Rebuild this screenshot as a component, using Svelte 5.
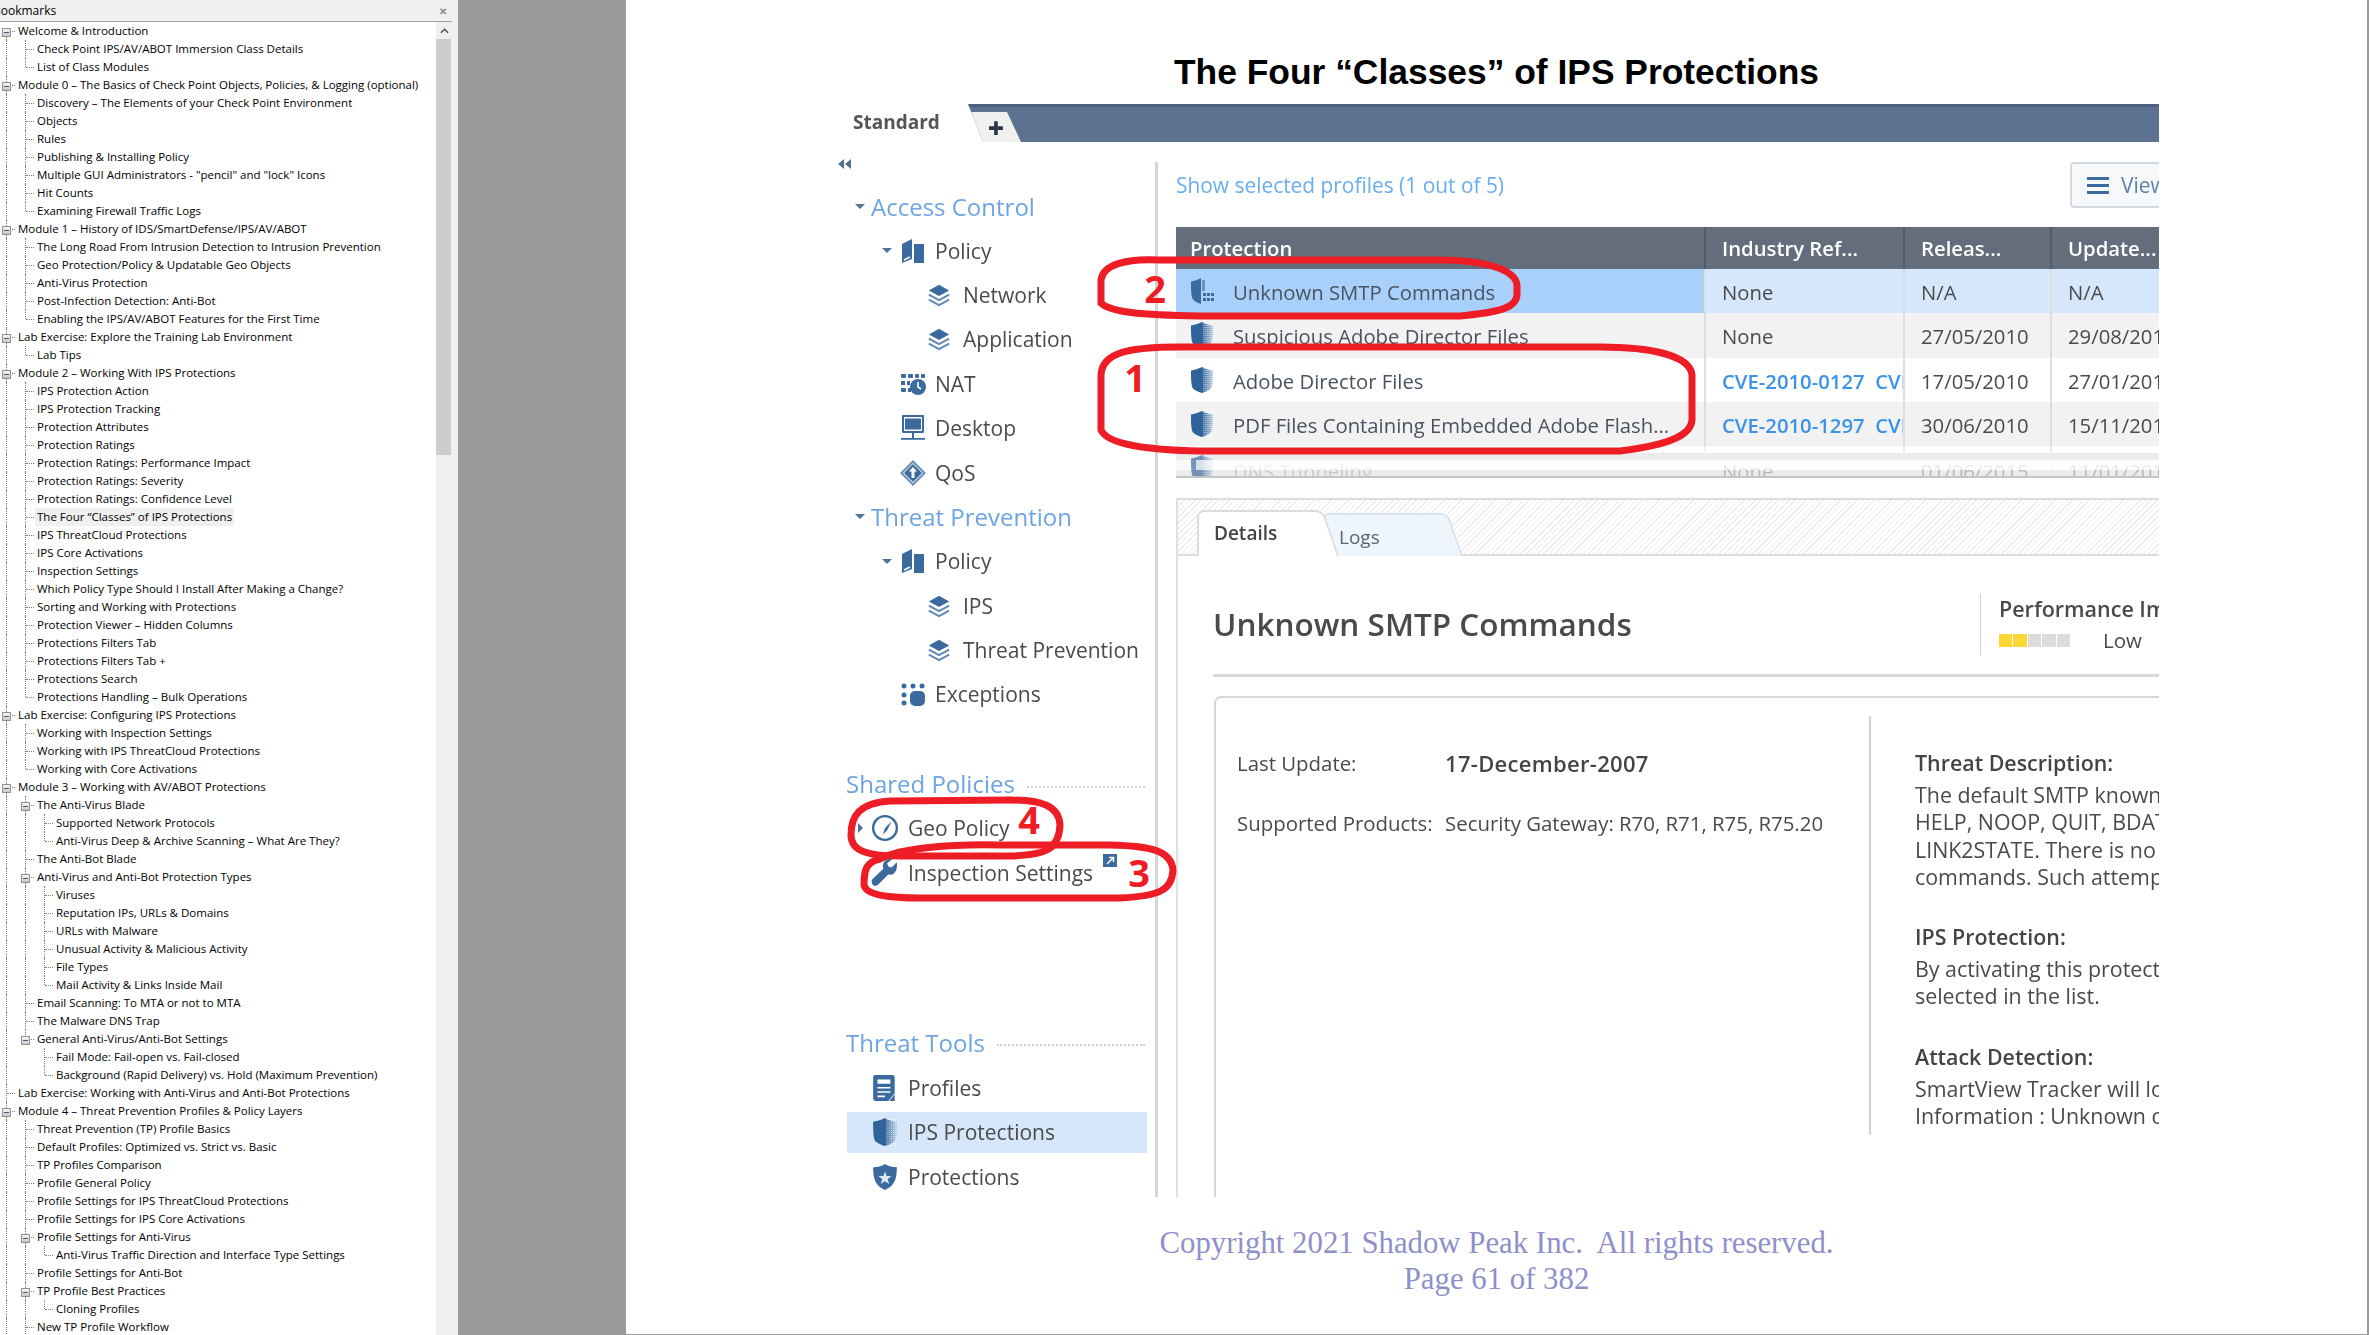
<script>
const tree = [
  [0, 'Welcome & Introduction', 1],
  [1, 'Check Point IPS/AV/ABOT Immersion Class Details'],
  [1, 'List of Class Modules'],
  [0, 'Module 0 – The Basics of Check Point Objects, Policies, & Logging (optional)', 1],
  [1, 'Discovery – The Elements of your Check Point Environment'],
  [1, 'Objects'],
  [1, 'Rules'],
  [1, 'Publishing & Installing Policy'],
  [1, 'Multiple GUI Administrators - "pencil" and "lock" Icons'],
  [1, 'Hit Counts'],
  [1, 'Examining Firewall Traffic Logs'],
  [0, 'Module 1 – History of IDS/SmartDefense/IPS/AV/ABOT', 1],
  [1, 'The Long Road From Intrusion Detection to Intrusion Prevention'],
  [1, 'Geo Protection/Policy & Updatable Geo Objects'],
  [1, 'Anti-Virus Protection'],
  [1, 'Post-Infection Detection: Anti-Bot'],
  [1, 'Enabling the IPS/AV/ABOT Features for the First Time'],
  [0, 'Lab Exercise: Explore the Training Lab Environment', 1],
  [1, 'Lab Tips'],
  [0, 'Module 2 – Working With IPS Protections', 1],
  [1, 'IPS Protection Action'],
  [1, 'IPS Protection Tracking'],
  [1, 'Protection Attributes'],
  [1, 'Protection Ratings'],
  [1, 'Protection Ratings: Performance Impact'],
  [1, 'Protection Ratings: Severity'],
  [1, 'Protection Ratings: Confidence Level'],
  [1, 'The Four “Classes” of IPS Protections'],
  [1, 'IPS ThreatCloud Protections'],
  [1, 'IPS Core Activations'],
  [1, 'Inspection Settings'],
  [1, 'Which Policy Type Should I Install After Making a Change?'],
  [1, 'Sorting and Working with Protections'],
  [1, 'Protection Viewer – Hidden Columns'],
  [1, 'Protections Filters Tab'],
  [1, 'Protections Filters Tab +'],
  [1, 'Protections Search'],
  [1, 'Protections Handling – Bulk Operations'],
  [0, 'Lab Exercise: Configuring IPS Protections', 1],
  [1, 'Working with Inspection Settings'],
  [1, 'Working with IPS ThreatCloud Protections'],
  [1, 'Working with Core Activations'],
  [0, 'Module 3 – Working with AV/ABOT Protections', 1],
  [1, 'The Anti-Virus Blade', 1],
  [2, 'Supported Network Protocols'],
  [2, 'Anti-Virus Deep & Archive Scanning – What Are They?'],
  [1, 'The Anti-Bot Blade'],
  [1, 'Anti-Virus and Anti-Bot Protection Types', 1],
  [2, 'Viruses'],
  [2, 'Reputation IPs, URLs & Domains'],
  [2, 'URLs with Malware'],
  [2, 'Unusual Activity & Malicious Activity'],
  [2, 'File Types'],
  [2, 'Mail Activity & Links Inside Mail'],
  [1, 'Email Scanning: To MTA or not to MTA'],
  [1, 'The Malware DNS Trap'],
  [1, 'General Anti-Virus/Anti-Bot Settings', 1],
  [2, 'Fail Mode: Fail-open vs. Fail-closed'],
  [2, 'Background (Rapid Delivery) vs. Hold (Maximum Prevention)'],
  [0, 'Lab Exercise: Working with Anti-Virus and Anti-Bot Protections'],
  [0, 'Module 4 – Threat Prevention Profiles & Policy Layers', 1],
  [1, 'Threat Prevention (TP) Profile Basics'],
  [1, 'Default Profiles: Optimized vs. Strict vs. Basic'],
  [1, 'TP Profiles Comparison'],
  [1, 'Profile General Policy'],
  [1, 'Profile Settings for IPS ThreatCloud Protections'],
  [1, 'Profile Settings for IPS Core Activations'],
  [1, 'Profile Settings for Anti-Virus', 1],
  [2, 'Anti-Virus Traffic Direction and Interface Type Settings'],
  [1, 'Profile Settings for Anti-Bot'],
  [1, 'TP Profile Best Practices', 1],
  [2, 'Cloning Profiles'],
  [1, 'New TP Profile Workflow']
]

// does a line at column c carry on below row i (the list runs on past the window)
function continues(i, c) {
  for (let j = i + 1; j < tree.length; j++) {
    if (tree[j][0] < c) return false
    if (tree[j][0] === c) return true
  }
  return c <= 1
}

const rows = tree.map(([level, text, open], i) => ({
  level,
  text,
  open,
  trunks: Array.from({ length: level }, (_, c) => continues(i, c)),
  more: continues(i, level),
  first: i === 0,
  current: text.startsWith('The Four')
}))

const shieldPath = 'M13 0C9 2 5 3 2 3.500c0 8 0 15 2 18 2 2 6 3.500 9 4.500 3-1 7-2.500 9-4.500 2-3 2-10 2-18C20 3 16 2 13 0z'
const shieldFill = '<linearGradient id="shield-fade" x1="0" x2="1" y1="0" y2="0"><stop offset=".5" stop-color="#30639a"/><stop offset=".72" stop-color="#6c93ba"/><stop offset="1" stop-color="#bcd0e3"/></linearGradient>'
// white specks over the right half of the shield
const shieldSpecks = Array.from({ length: 5 }, (_, x) =>
  Array.from({ length: 13 }, (_, y) =>
    `<rect x="${14.500 + x * 2}" y="${1 + y * 2}" width=".8" height=".8" fill="#fff"/>`).join('')).join('')
const shield = `${shieldFill}<path d="${shieldPath}" fill="url(#shield-fade)"/>${shieldSpecks}`

const icons = {
  book: '<path d="M2 6 12 1v20L2 25z"/><path d="M14 6h10v19H14z"/><path d="M4 22l6-3" stroke="#fff" stroke-width="1.4"/>',
  layers: '<path d="M13 2 24 8 13 14 2 8z"/><path d="M2 12.5l11 6 11-6M2 18l11 6 11-6" fill="none" stroke="#5f88b3" stroke-width="2.2"/>',
  nat: '<rect x="1" y="3" width="5" height="4" rx="1"/><rect x="8" y="3" width="5" height="4" rx="1"/><rect x="15" y="3" width="4" height="4" rx="1"/><rect x="21" y="3" width="4" height="4" rx="1"/><rect x="1" y="10" width="4" height="4"/><rect x="7" y="10" width="3" height="4"/><rect x="1" y="17" width="5" height="4" rx="1"/><rect x="8" y="17" width="3" height="4"/><circle cx="18" cy="16" r="8"/><path d="M18 11v5l3 2" fill="none" stroke="#fff" stroke-width="1.6"/>',
  desktop: '<path fill-rule="evenodd" d="M3 0h20a1 1 0 0 1 1 1v16a1 1 0 0 1-1 1H3a1 1 0 0 1-1-1V1a1 1 0 0 1 1-1zm1 2v14h18V2z"/><rect x="5" y="3.500" width="16" height="11"/><path d="M12 18h2v5h-2zM1 23h24v1.800H1z"/>',
  qos: '<path fill-rule="evenodd" d="M13 0 26 13 13 26 0 13zM13 3 3 13l10 10 10-10z" opacity=".75"/><path d="M13 4l9 9-9 9-9-9z"/><path d="M13 7l4 4.500h-2.500V18h-3v-6.500H9z" fill="#fff"/>',
  dots: '<circle cx="4" cy="5" r="2.500"/><circle cx="13" cy="5" r="2.500"/><circle cx="22" cy="5" r="2.500"/><circle cx="4" cy="14" r="2.500"/><circle cx="4" cy="22" r="2.500"/><rect x="10" y="10" width="15" height="15" rx="5"/>',
  compass: '<circle cx="13" cy="13" r="11" fill="none" stroke="#3a6a9e" stroke-width="2.2"/><path d="M19 7l-4 8-4 4 2-6z"/>',
  wrench: '<path d="M24 3l-5 5-3-1-1-3 5-4c-5-1-9 2-9 7l.5 2L1 19c-1 2 0 5 1.500 5.500 2 1 3.500 0 4.500-1l9-9c5 1 9-3 8-11.500z"/>',
  profile: '<path fill-rule="evenodd" d="M4 1h16a2 2 0 0 1 2 2v15l-6 7H4a2 2 0 0 1-2-2V3a2 2 0 0 1 2-2zm2 4v4h12V5zm0 7v1.500h12V12zm0 4v1.500h12V16zm0 4v1.500h7V20z"/><path d="M17 25l5-6v6z"/>',
  shield,
  shieldGrid: '<path d="M12 0C9 2 5 3 2 3.500c0 8 0 15 2 18 2 2 5 3.500 8 4.500z"/><path d="M13 2h3v11h-3z" opacity=".6"/><rect x="14" y="15" width="3" height="3"/><rect x="18" y="15" width="3" height="3"/><rect x="22" y="15" width="3" height="3"/><rect x="14" y="20" width="3" height="3"/><rect x="18" y="20" width="3" height="3"/><rect x="22" y="20" width="3" height="3"/>',
  guard: '<path d="M13 1c3 2 7 3 11 3 0 9-1 17-11 21C3 21 2 13 2 4c4 0 8-1 11-3z"/><path d="M13 8l1.500 4 4.500 0-3.500 3 1.500 4.500-4-2.500-4 2.500 1.500-4.500L7 12l4.500 0z" fill="#dfe8f1"/>'
}

const nav = [
  { kind: 'sec', label: 'Access Control' },
  { kind: 'l1', label: 'Policy', icon: 'book', caret: true },
  { kind: 'l2', label: 'Network', icon: 'layers' },
  { kind: 'l2', label: 'Application', icon: 'layers' },
  { kind: 'l1', label: 'NAT', icon: 'nat' },
  { kind: 'l1', label: 'Desktop', icon: 'desktop' },
  { kind: 'l1', label: 'QoS', icon: 'qos' },
  { kind: 'sec', label: 'Threat Prevention' },
  { kind: 'l1', label: 'Policy', icon: 'book', caret: true },
  { kind: 'l2', label: 'IPS', icon: 'layers' },
  { kind: 'l2', label: 'Threat Prevention', icon: 'layers' },
  { kind: 'l1', label: 'Exceptions', icon: 'dots' }
]

const protections = [
  { name: 'Unknown SMTP Commands', icon: 'shieldGrid', ref: 'None', rel: 'N/A', upd: 'N/A', cls: 'selected' },
  { name: 'Suspicious Adobe Director Files', icon: 'shield', ref: 'None', rel: '27/05/2010', upd: '29/08/2011', cls: 'odd' },
  { name: 'Adobe Director Files', icon: 'shield', ref: 'CVE-2010-0127  CVE-2010', link: true, rel: '17/05/2010', upd: '27/01/2011', cls: '' },
  { name: 'PDF Files Containing Embedded Adobe Flash...', icon: 'shield', ref: 'CVE-2010-1297  CVE-2010', link: true, rel: '30/06/2010', upd: '15/11/2011', cls: 'odd' }
]

const description = [
  { title: 'Threat Description:', lines: ['The default SMTP known', 'HELP, NOOP, QUIT, BDAT', 'LINK2STATE. There is no', 'commands. Such attempts'] },
  { title: 'IPS Protection:', lines: ['By activating this protection', 'selected in the list.'] },
  { title: 'Attack Detection:', lines: ['SmartView Tracker will log', 'Information : Unknown of'] }
]
</script>

{#snippet icon(name)}
  <svg class="icon" viewBox="0 0 26 26" aria-hidden="true">{@html icons[name]}</svg>
{/snippet}

<div class="screen">
  <aside class="bookmarks">
    <div class="bm-head">
      <span class="bm-title">Bookmarks</span>
      <span class="bm-close">✕</span>
    </div>
    <div class="bm-body">
      <div class="tree">
        {#each rows as row}
          <div class="tree-row">
            {#each row.trunks as on}
              <span class="cell" class:trunk={on}></span>
            {/each}
            <span class="cell branch" class:more={row.more} class:first={row.first}>
              {#if row.open}<span class="expander"></span>{/if}
            </span>
            <span class="tree-label" class:current={row.current}>{row.text}</span>
          </div>
        {/each}
      </div>
      <div class="scroll">
        <div class="scroll-up">
          <svg viewBox="0 0 10 6" width="9" height="6"><path d="M1 5l4-4 4 4" fill="none" stroke="#505050" stroke-width="1.600"/></svg>
        </div>
        <div class="scroll-thumb"></div>
      </div>
    </div>
  </aside>

  <main class="page">
    <h1>The Four “Classes” of IPS Protections</h1>

    <div class="shot">
      <div class="shot-inner">
        <div class="tabbar">
          <div class="tab-standard">Standard</div>
          <div class="tab-strip"><div class="tab-plus">+</div></div>
        </div>
        <div class="body">
          <nav class="nav">
            <div class="collapse">
              <svg viewBox="0 0 14 10" width="14" height="10"><path d="M6 0v10L0 5zM13 0v10L7 5z" fill="#54708f"/></svg>
            </div>
            <div class="nav-list">
              {#each nav as item}
                <div class="row {item.kind}">
                  {#if item.kind === 'sec' || item.kind === 'l1'}
                    <span class="caret">{#if item.kind === 'sec' || item.caret}<i></i>{/if}</span>
                  {/if}
                  {#if item.icon}{@render icon(item.icon)}{/if}
                  <span>{item.label}</span>
                </div>
              {/each}

              <div class="group-head shared"><span>Shared Policies</span><i></i></div>
              <div class="row tool">
                <span class="caret side"><i></i></span>
                {@render icon('compass')}
                <span>Geo Policy</span>
              </div>
              <div class="row tool">
                <span class="caret"></span>
                {@render icon('wrench')}
                <span>Inspection Settings</span>
                <svg class="ext" viewBox="0 0 14 13"><rect width="14" height="13" fill="#3a6a9e"/><path d="M4 10l6-6M6 3.500h4.500V8" fill="none" stroke="#fff" stroke-width="1.500"/></svg>
              </div>

              <div class="group-head tools"><span>Threat Tools</span><i></i></div>
              <div class="row tool">
                <span class="caret"></span>
                {@render icon('profile')}
                <span>Profiles</span>
              </div>
              <div class="row tool active">
                <span class="caret"></span>
                {@render icon('shield')}
                <span>IPS Protections</span>
              </div>
              <div class="row tool">
                <span class="caret"></span>
                {@render icon('guard')}
                <span>Protections</span>
              </div>
            </div>
          </nav>

          <section class="content">
            <div class="toolbar">
              <span class="show-link">Show selected profiles (1 out of 5)</span>
              <div class="view-btn">
                <svg viewBox="0 0 22 18" width="22" height="18"><path d="M0 1h22v3H0zM0 8h22v3H0zM0 15h22v3H0z" fill="#3a6a9e"/></svg>
                <span>View</span>
              </div>
            </div>

            <div class="table">
              <div class="t-row t-head">
                <div>Protection</div>
                <div>Industry Ref...</div>
                <div>Releas...</div>
                <div>Update...</div>
              </div>
              {#each protections as p}
                <div class="t-row {p.cls}">
                  <div class="name">{@render icon(p.icon)}<span>{p.name}</span></div>
                  <div class:link={p.link}>{p.ref}</div>
                  <div>{p.rel}</div>
                  <div>{p.upd}</div>
                </div>
              {/each}
              <div class="t-row faded">
                <div class="name">{@render icon('shield')}<span>DNS Tunneling</span></div>
                <div>None</div>
                <div>01/06/2015</div>
                <div>11/01/2016</div>
              </div>
            </div>

            <div class="details">
              <div class="d-tabs">
                <div class="d-tab on">Details</div>
                <div class="d-tab off">Logs</div>
              </div>
              <div class="d-head">
                <h2>Unknown SMTP Commands</h2>
                <div class="perf">
                  <b>Performance Impact</b>
                  <div class="perf-row">
                    <div class="meter">
                      {#each [1, 1, 0, 0, 0] as lit}<i class:lit></i>{/each}
                    </div>
                    <span>Low</span>
                  </div>
                </div>
              </div>
              <div class="d-box">
                <div class="d-left">
                  <div class="kv"><span>Last Update:</span><b>17-December-2007</b></div>
                  <div class="kv"><span>Supported Products:</span><span>Security Gateway: R70, R71, R75, R75.20</span></div>
                </div>
                <div class="d-right">
                  {#each description as block}
                    <div class="d-block">
                      <b>{block.title}</b>
                      {#each block.lines as line}<p>{line}</p>{/each}
                    </div>
                  {/each}
                </div>
              </div>
            </div>
          </section>
        </div>
      </div>

      <svg class="ink" viewBox="820 104 1339 1093" aria-hidden="true">
        <g fill="none" stroke="#ee1c25" stroke-width="7">
          <path d="M1160 260C1125 258 1103 265 1101 280L1101 303C1110 312 1140 315 1200 316L1460 316C1500 312 1516 308 1517 295L1517 285C1515 268 1480 260 1440 260Z"/>
          <path d="M1180 347C1130 347 1102 352 1101 375L1101 430C1108 445 1150 450 1200 451L1620 451C1670 445 1691 435 1692 420L1692 375C1690 355 1650 347 1600 347Z"/>
          <path d="M890 801C860 803 851 815 851 835C851 850 865 856 900 856L1010 856C1045 855 1059 850 1060 825C1059 805 1040 800 1010 800Z"/>
          <path d="M880 859C866 862 864 870 864 885C866 895 890 898 920 898L1120 898C1160 896 1172 890 1173 870C1171 850 1150 846 1110 845L1000 845C950 844 900 848 880 859Z"/>
        </g>
        <g class="ink-num">
          <text x="1155" y="303">2</text>
          <text x="1135" y="392">1</text>
          <text x="1029" y="834">4</text>
          <text x="1139" y="887">3</text>
        </g>
      </svg>
    </div>

    <footer>
      <div>Copyright 2021 Shadow Peak Inc.&nbsp; All rights reserved.</div>
      <div>Page 61 of 382</div>
    </footer>
  </main>
</div>

<style>
:global(body) {
  margin: 0;
  background: #9b9b9b;
  overflow: hidden;
}
.screen {
  display: flex;
  width: 2369px;
  height: 1335px;
  overflow: hidden;
  background: #9b9b9b;
  font-family: "Open Sans", "Liberation Sans", sans-serif;
}

/* bookmarks panel */
.bookmarks {
  flex: none;
  width: 458px;
  height: 1335px;
  background: #f0f0f0;
  overflow: hidden;
}
.bm-head {
  display: flex;
  align-items: center;
  justify-content: space-between;
  height: 21px;
  width: 452px;
  border-bottom: 1px solid #a0a0a0;
  box-sizing: content-box;
  font-size: 12px;
  color: #000;
}
.bm-title {
  margin-left: -7px;
}
.bm-close {
  margin-right: 5px;
  font-size: 10px;
  color: #8a8a8a;
  font-weight: bold;
}
.bm-body {
  display: flex;
  width: 452px;
  height: 1313px;
}
.tree {
  flex: none;
  width: 436px;
  background: #fff;
  overflow: hidden;
}
.tree-row {
  display: flex;
  height: 18px;
  font-size: 11.500px;
  line-height: 18px;
  color: #000;
  white-space: nowrap;
}
.cell {
  position: relative;
  flex: none;
  width: 19px;
}
.trunk::before,
.branch::before {
  content: "";
  position: absolute;
  left: 6px;
  top: 0;
  height: 18px;
  border-left: 1px dotted #808080;
}
.branch::before {
  height: 9px;
}
.branch.more::before {
  height: 18px;
}
.branch.first::before {
  top: 9px;
  height: 9px;
}
.branch::after {
  content: "";
  position: absolute;
  left: 7px;
  top: 9px;
  width: 8px;
  border-top: 1px dotted #808080;
}
.expander {
  position: absolute;
  z-index: 1;
  left: 2px;
  top: 6px;
  width: 7px;
  height: 7px;
  border: 1px solid #919191;
  background: linear-gradient(#f7f7f7, #c8c8c8);
}
.expander::after {
  content: "";
  position: absolute;
  left: 1px;
  right: 1px;
  top: 3px;
  height: 1px;
  background: #3f5a8a;
}
.tree-label {
  margin-left: -3px;
  padding: 0 2px;
}
.tree-label.current {
  background: #f0f0f0;
}
.scroll {
  flex: none;
  width: 16px;
  background: #f0f0f0;
}
.scroll-up {
  display: flex;
  align-items: center;
  justify-content: center;
  height: 17px;
}
.scroll-thumb {
  width: 15px;
  height: 416px;
  background: #cdcdcd;
}

/* document page */
.page {
  flex: none;
  display: flex;
  flex-direction: column;
  align-items: center;
  width: 1741px;
  height: 1334px;
  margin-left: 168px;
  background: #fff;
}
h1 {
  margin: 52px 0 12px;
  font-family: "Liberation Sans", Arial, sans-serif;
  font-size: 35.400px;
  line-height: 40px;
  font-weight: bold;
  color: #000;
}
footer {
  margin-top: 28px;
  font-family: "Liberation Serif", "Times New Roman", serif;
  font-size: 30.800px;
  line-height: 36px;
  color: #8f8fcb;
  text-align: center;
}

/* the pasted screenshot */
.shot {
  position: relative;
  align-self: flex-start;
  margin-left: 194px;
  width: 1339px;
  height: 1093px;
  overflow: hidden;
}
.shot-inner {
  width: 100%;
  height: 100%;
  filter: blur(0.55px);
  color: #4a4a4a;
}
.ink {
  position: absolute;
  inset: 0;
  width: 100%;
  height: 100%;
}
.ink-num {
  fill: #ee1c25;
  font-family: "Open Sans", sans-serif;
  font-size: 38px;
  font-weight: 700;
  text-anchor: middle;
}
.tabbar {
  display: flex;
  height: 38px;
}
.tab-standard {
  flex: none;
  width: 148px;
  padding-left: 33px;
  box-sizing: border-box;
  font-size: 19px;
  font-weight: 700;
  line-height: 36px;
  color: #555;
}
.tab-strip {
  flex: 1;
  background: linear-gradient(#4f6180 0 3px, #5d7190 3px);
  clip-path: polygon(0 0, 100% 0, 100% 100%, 15px 100%);
}
.tab-plus {
  width: 50px;
  height: 30px;
  margin: 8px 0 0 3px;
  background: #f0f0f0;
  clip-path: polygon(0 0, 36px 0, 50px 100%, 11px 100%);
  font-size: 28px;
  font-weight: 800;
  line-height: 30px;
  text-align: center;
  color: #2a3545;
}
.body {
  display: grid;
  grid-template-columns: 338px 1fr;
  height: 1055px;
  margin-top: 1px;
}
.collapse {
  height: 19px;
  padding: 9px 0 0 18px;
  box-sizing: border-box;
}
.nav-list {
  height: 1035px;
  padding-top: 22px;
  box-sizing: border-box;
  border-right: 3px solid #d6d6d6;
}
.row {
  display: flex;
  align-items: center;
  height: 44.400px;
  font-size: 21px;
  white-space: nowrap;
}
.icon {
  flex: none;
  width: 26px;
  height: 26px;
  fill: #3a6a9e;
}
.caret {
  flex: none;
  display: flex;
  align-items: center;
}
.caret i {
  width: 0;
  height: 0;
  border: 5px solid transparent;
  border-top-color: #4f7299;
  border-bottom-width: 0;
}
.caret.side i {
  border: 5px solid transparent;
  border-left-color: #4f7299;
  border-right-width: 0;
}
.row.sec {
  padding-left: 35px;
  font-size: 24px;
  color: #6da4e2;
}
.row.sec .caret {
  width: 16px;
}
.row.l1 {
  padding-left: 62px;
}
.row.l1 .caret {
  width: 18px;
}
.row.l1 .icon {
  margin-right: 9px;
}
.row.l2 {
  padding-left: 107px;
}
.row.l2 .icon {
  width: 24px;
  height: 26px;
  margin-right: 12px;
}
.row.tool {
  margin: 0 8px 0 27px;
  padding-left: 11px;
}
.row.tool .caret {
  width: 13px;
}
.row.tool .icon {
  width: 28px;
  height: 28px;
  margin-right: 9px;
}
.row.active {
  height: 41px;
  margin-top: 1.700px;
  margin-bottom: 1.700px;
  background: #d6e7fb;
}
.ext {
  flex: none;
  align-self: flex-start;
  width: 14px;
  height: 13px;
  margin: 4px 0 0 10px;
}
.group-head {
  display: flex;
  align-items: center;
  height: 44.400px;
  padding-left: 26px;
  font-size: 24px;
  color: #6da4e2;
}
.group-head i {
  flex: 1;
  margin: 6px 10px 0 12px;
  border-top: 2px dotted #cfcfcf;
}
.group-head.shared {
  margin-top: 45px;
}
.group-head.tools {
  margin: 125px 0 1.500px;
}
.content {
  padding: 19px 0 0 18px;
  min-width: 0;
}
.toolbar {
  display: flex;
  justify-content: space-between;
  align-items: center;
  height: 46px;
}
.show-link {
  font-size: 20.900px;
  color: #69aef0;
}
.view-btn {
  flex: none;
  display: flex;
  align-items: center;
  gap: 12px;
  width: 89px;
  height: 46px;
  padding-left: 15px;
  box-sizing: border-box;
  overflow: hidden;
  border: 2px solid #d3d9e0;
  border-right: 0;
  border-radius: 4px 0 0 4px;
  background: #f6f8fa;
  font-size: 21px;
  color: #5d7fae;
}
.view-btn svg {
  flex: none;
}
.table {
  margin-top: 19px;
  height: 251px;
  font-size: 20.300px;
}
.t-row {
  display: grid;
  grid-template-columns: 530px 199px 147px 1fr;
  height: 44.300px;
  white-space: nowrap;
}
.t-row > div {
  display: flex;
  align-items: center;
  padding: 2px 0 0 16px;
  box-sizing: border-box;
  overflow: hidden;
  border-right: 2px solid #dedede;
}
.t-row > div:last-child {
  border-right: 0;
}
.t-head {
  height: 42px;
  background: #636d7b;
  color: #fff;
  font-weight: 600;
}
.t-head > div {
  padding-top: 0;
  border-right-color: #525b68;
}
.t-row.selected {
  background: #d6e7fb;
}
.t-row.selected > .name {
  background: #a9d0fb;
}
.t-row.odd {
  background: #f2f2f2;
}
.t-row > .name {
  gap: 18px;
  padding-left: 13px;
  color: #4a5260;
}
.t-row > .name :global(.icon) {
  margin-top: -2px;
}
.t-head > div:first-child {
  padding-left: 14px;
}
.link {
  color: #3b93e8;
  font-weight: 600;
  white-space: pre;
}
.t-row.faded {
  position: relative;
  height: 32px;
  overflow: hidden;
  box-sizing: border-box;
  border-bottom: 2px solid #c4c4c4;
  background: linear-gradient(#fff 0 7px, #ececec 7px 14px, #fafafa 14px 24px, #ececec 24px);
  color: #b9b9b9;
}
.t-row.faded > div {
  align-items: flex-start;
  padding-top: 11px;
  border-right-color: #ececec;
}
.t-row.faded > .name {
  color: #b9b9b9;
  opacity: 0.65;
}
/* sash of the splitter drawn over the last row */
.t-row.faded::after {
  content: "";
  position: absolute;
  left: 20px;
  right: 0;
  top: 14px;
  height: 10px;
  background: rgba(255, 255, 255, 0.7);
}
.details {
  margin-top: 20px;
  height: 699px;
  box-sizing: border-box;
  border-left: 2px solid #e0e0e0;
}
.d-tabs {
  display: flex;
  align-items: flex-end;
  height: 58px;
  padding-left: 19px;
  box-sizing: border-box;
  border-top: 2px solid #dcdcdc;
  border-bottom: 2px solid #dcdcdc;
  background: repeating-linear-gradient(135deg, #ededed 0 1px, #fff 1px 4px);
}
.d-tab {
  position: relative;
  margin-bottom: -2px;
  padding-left: 15px;
  box-sizing: border-box;
  font-size: 19px;
  border: 2px solid #dcdcdc;
  border-width: 2px 0 0 2px;
  border-radius: 7px 0 0 0;
  background: #fff;
}
.d-tab::after {
  content: "";
  position: absolute;
  top: -2px;
  bottom: 0;
  right: -24px;
  width: 40px;
  z-index: -1;
  background: inherit;
  border: 2px solid #dcdcdc;
  border-width: 2px 2px 0 0;
  border-radius: 0 8px 0 0;
  transform: skewX(19deg);
  transform-origin: bottom left;
}
.d-tab.on {
  z-index: 2;
  width: 118px;
  height: 46px;
  line-height: 42px;
  font-weight: 600;
  color: #444;
}
.d-tab.off {
  z-index: 1;
  width: 117px;
  height: 43px;
  margin-left: 7px;
  line-height: 44px;
  background: #eef5fd;
  border-color: #d8e3ee;
  color: #5a6470;
}
.d-tab.off::after {
  border-color: #d8e3ee;
}
.d-head {
  display: flex;
  align-items: center;
  height: 61px;
  margin-left: 35px;
  padding: 38px 0 19px;
  border-bottom: 3px solid #d8d8d8;
}
h2 {
  flex: none;
  width: 767px;
  margin: -2px 0 0;
  font-size: 31.500px;
  font-weight: 600;
  color: #4a4a4a;
}
.perf {
  flex: none;
  width: 300px;
  height: 61px;
  padding-left: 18px;
  border-left: 1px solid #d0d0d0;
  font-size: 20.500px;
  white-space: nowrap;
}
.perf b {
  display: block;
  font-size: 21.500px;
  font-weight: 600;
  line-height: 29px;
  color: #4a4a4a;
}
.perf-row {
  display: flex;
  align-items: center;
  gap: 32px;
  height: 34px;
}
.meter {
  display: flex;
  width: 72px;
  height: 13px;
}
.meter i {
  flex: 1;
  background: #dcdcdc;
  margin-right: 1px;
}
.meter i.lit {
  background: #fdd835;
}
.d-box {
  display: grid;
  grid-template-columns: 655px 1fr;
  height: 501px;
  margin: 19px 0 0 36px;
  box-sizing: border-box;
  border: 2px solid #d8d8d8;
  border-width: 2px 0 0 2px;
  border-radius: 7px 0 0 0;
  font-size: 20.400px;
  white-space: nowrap;
}
.d-left {
  height: 419px;
  margin-top: 18px;
  padding: 32px 0 0 21px;
  box-sizing: border-box;
  border-right: 2px solid #ccd3da;
}
.kv {
  display: grid;
  grid-template-columns: 208px 1fr;
  height: 60px;
  line-height: 30px;
}
.kv b {
  font-size: 22px;
  font-weight: 600;
  letter-spacing: 0.3px;
  color: #444;
}
.d-right {
  padding: 50px 0 0 44px;
  overflow: hidden;
  font-size: 21.400px;
}
.d-block {
  margin-bottom: 32px;
}
.d-block b {
  display: block;
  height: 30px;
  margin-bottom: 3px;
  line-height: 30px;
  font-weight: 600;
  color: #444;
}
.d-block p {
  margin: 0;
  line-height: 27.300px;
}
</style>
